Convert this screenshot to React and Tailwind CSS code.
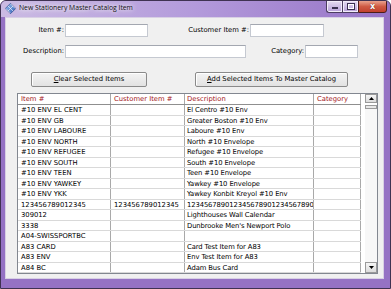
import React from "react";

const rows = [
  ["#10 ENV EL CENT", "", "El Centro #10 Env"],
  ["#10 ENV GB", "", "Greater Boston #10 Env"],
  ["#10 ENV LABOURE", "", "Laboure #10 Env"],
  ["#10 ENV NORTH", "", "North #10 Envelope"],
  ["#10 ENV REFUGEE", "", "Refugee #10 Envelope"],
  ["#10 ENV SOUTH", "", "South #10 Envelope"],
  ["#10 ENV TEEN", "", "Teen #10 Envelope"],
  ["#10 ENV YAWKEY", "", "Yawkey #10 Envelope"],
  ["#10 ENV YKK", "", "Yawkey Konbit Kreyol #10 Env"],
  ["123456789012345", "123456789012345", "123456789012345678901234567890"],
  ["309012", "", "Lighthouses Wall Calendar"],
  ["3338", "", "Dunbrooke Men's Newport Polo"],
  ["A04-SWISSPORTBC", "", ""],
  ["A83 CARD", "", "Card Test Item for A83"],
  ["A83 ENV", "", "Env Test Item for A83"],
  ["A84 BC", "", "Adam Bus Card"],
];

function Field({ w }) {
  return (
    <div
      className={`h-[13px] bg-white border border-[#c5c9d1] border-t-[#a3a7b0] ${w}`}
    />
  );
}

function Button({ w, first, rest }) {
  return (
    <div
      className={`h-[15px] ${w} flex items-center justify-center border border-[#8a8a8a] rounded-[2px] bg-gradient-to-b from-[#f4f4f4] to-[#e2e2e2] shadow-[inset_1px_1px_0_#fff]`}
    >
      <span>
        <span className="underline">{first}</span>
        {rest}
      </span>
    </div>
  );
}

function ArrowBtn({ up, h }) {
  return (
    <div
      className={`${h} w-[12px] flex items-center justify-center bg-gradient-to-b from-[#f6f6f6] to-[#dcdcdc] border border-[#9a9a9a]`}
    >
      <svg width="5" height="3" viewBox="0 0 5 3">
        {up ? (
          <polygon points="0,3 5,3 2.5,0" fill="#000" />
        ) : (
          <polygon points="0,0 5,0 2.5,3" fill="#000" />
        )}
      </svg>
    </div>
  );
}

export default function App() {
  const cell = "h-full border-r border-[#a9a9a9] overflow-hidden whitespace-nowrap leading-[10px]";
  return (
    <div className="w-[391px] h-[289px] overflow-hidden flex flex-col border border-[#3f3252] rounded-t-[6px] bg-[#9572c4] font-['DejaVu_Sans',sans-serif] text-[6.8px] text-black">
      {/* title bar */}
      <div className="h-[16px] flex items-start bg-gradient-to-r from-[#cbbbe3] via-[#b39adb] to-[#9673c6]">
        <div className="flex items-center h-[13px] mt-[1px] ml-[4px]">
          <svg width="11" height="11" viewBox="0 0 11 11">
            <defs>
              <linearGradient id="ic" x1="0" y1="0" x2="1" y2="1">
                <stop offset="0" stopColor="#9fc3f0" />
                <stop offset="1" stopColor="#2f5fb8" />
              </linearGradient>
            </defs>
            <polygon points="5.5,0.3 10.7,5.5 5.5,10.7 0.3,5.5" fill="url(#ic)" stroke="#243f80" strokeWidth="0.6" />
            <path d="M3 3 L8 8 M5.5 0.8 L10 5.3 M1 5.7 L5.3 10 M8 3 L3 8" stroke="#fff" strokeWidth="0.6" />
          </svg>
          <span className="ml-[3px] font-['Open_Sans',sans-serif] text-[6.8px] text-[#111] [text-shadow:0_0_4px_#fff,0_0_6px_#fff]">
            New Stationery Master Catalog Item
          </span>
        </div>
        <div className="ml-auto mr-[3px] flex h-[13px] -mt-[1px]">
          <div className="w-[16px] h-full border border-[#4c3d61] border-r-0 rounded-bl-[3px] bg-gradient-to-b from-[#e6dcf2] to-[#b79fd8] flex items-center justify-center shadow-[inset_0_0_0_1px_#f3ecfa]">
            <div className="w-[6px] h-[2px] bg-white border border-[#3a3050] mt-[3px]" />
          </div>
          <div className="w-[16px] h-full border border-[#4c3d61] border-r-0 bg-gradient-to-b from-[#e6dcf2] to-[#b79fd8] flex items-center justify-center shadow-[inset_0_0_0_1px_#f3ecfa]">
            <div className="w-[6px] h-[5px] border-[1.5px] border-white outline outline-1 outline-[#3a3050]" />
          </div>
          <div className="w-[29px] h-full border border-[#4a1e18] rounded-br-[3px] bg-gradient-to-b from-[#e9a28e] via-[#cf5a44] to-[#c1402d] flex items-center justify-center">
            <span className="text-white font-bold text-[8px] leading-none [text-shadow:0_0_1px_#401010]">x</span>
          </div>
        </div>
      </div>

      {/* client area */}
      <div className="flex-1 ml-[4px] mr-[6px] mb-[9px] bg-[#f0f0f0] border border-[#d8d0e4] flex flex-col">
        <div className="flex items-center mt-[6px]">
          <div className="w-[59px] text-right pr-[1px]">Item #:</div>
          <Field w="w-[83px]" />
          <div className="w-[102px] text-right pr-[1px]">Customer Item #:</div>
          <Field w="w-[74px]" />
        </div>
        <div className="flex items-center mt-[8px]">
          <div className="w-[59px] text-right pr-[1px]">Description:</div>
          <Field w="w-[181px]" />
          <div className="w-[59px] text-right pr-[1px]">Category:</div>
          <Field w="w-[53px]" />
        </div>
        <div className="flex mt-[14px]">
          <div className="ml-[25px]">
            <Button w="w-[116px]" first="C" rest="lear Selected Items" />
          </div>
          <div className="ml-[48px]">
            <Button w="w-[153px]" first="A" rest="dd Selected Items To Master Catalog" />
          </div>
        </div>

        {/* grid */}
        <div className="ml-[11px] mt-[6px] w-[361px] h-[181px] border border-[#828790] bg-white flex">
          <div className="flex-1 flex flex-col">
            <div className="flex h-[11px] border-b border-[#8f8f8f] text-[#a3161b]">
              <div className={`w-[93px] pl-[3px] ${cell} border-[#777]`}>Item #</div>
              <div className={`w-[74px] pl-[3px] ${cell} border-[#777]`}>Customer Item #</div>
              <div className={`w-[129px] pl-[2px] ${cell} border-[#777]`}>Description</div>
              <div className={`w-[47px] pl-[3px] ${cell} border-[#777]`}>Category</div>
            </div>
            {rows.map((r, i) => (
              <div key={i} className="flex h-[10.5px] border-b border-[#d9d9d9]">
                <div className={`w-[93px] pl-[3px] ${cell}`}>{r[0]}</div>
                <div className={`w-[74px] pl-[3px] ${cell}`}>{r[1]}</div>
                <div className={`w-[129px] pl-[2px] ${cell} tracking-[-0.1px]`}>{r[2]}</div>
                <div className={`w-[47px] pl-[3px] ${cell}`}></div>
              </div>
            ))}
          </div>
          <div className="w-[16px] flex flex-col pl-[4px] bg-white">
            <ArrowBtn up h="h-[9px]" />
            <div className="mt-[2px] h-[4px] w-[12px] border border-[#9a9a9a] bg-[#e8e8e8]" />
            <div className="flex-1 w-[12px] bg-[#f7f7f7]" />
            <ArrowBtn h="h-[11px]" />
          </div>
        </div>
      </div>
    </div>
  );
}
